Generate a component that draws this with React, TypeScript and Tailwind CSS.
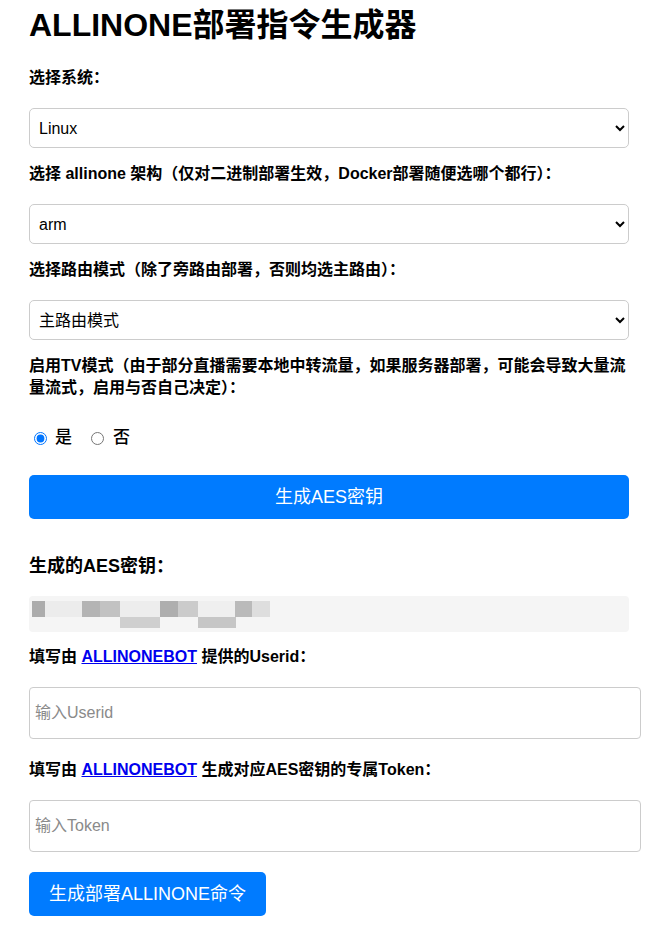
import { useState } from "react"

const font = { fontFamily: '"Liberation Sans", Arial, "Noto Sans CJK SC", sans-serif' }

// pixelated blur over the key
const keyRow1 = [
  { w: 13, c: "bg-[#acacac]" },
  { w: 37, c: "bg-[#ececec]" },
  { w: 18, c: "bg-[#b4b4b4]" },
  { w: 20, c: "bg-[#c2c2c2]" },
  { w: 40, c: "bg-[#ededed]" },
  { w: 18, c: "bg-[#aeaeae]" },
  { w: 20, c: "bg-[#cbcbcb]" },
  { w: 37, c: "bg-[#efefef]" },
  { w: 17, c: "bg-[#bababa]" },
  { w: 18, c: "bg-[#dedede]" },
]

export default function App() {
  const [tv, setTv] = useState("yes")

  return (
    <div className="min-h-screen bg-white pl-[29px] pt-[7px] pb-6 text-black" style={font}>
      <h1 className="text-[32px] font-bold leading-[37px]">ALLINONE部署指令生成器</h1>

      <div className="w-[600px]">
        <label className="mt-[23px] block text-[16px] font-bold leading-[22px]">选择系统：</label>
        <select
          defaultValue="linux"
          className="mt-[19px] block h-[40px] w-[600px] rounded-[5px] border border-[#cccccc] bg-white px-[5px] text-[16px]"
        >
          <option value="linux">Linux</option>
          <option value="windows">Windows</option>
          <option value="docker">Docker</option>
        </select>

        <label className="mt-[15px] block text-[16px] font-bold leading-[22px]">
          选择 allinone 架构（仅对二进制部署生效，Docker部署随便选哪个都行）：
        </label>
        <select
          defaultValue="arm"
          className="mt-[19px] block h-[40px] w-[600px] rounded-[5px] border border-[#cccccc] bg-white px-[5px] text-[16px]"
        >
          <option value="arm">arm</option>
          <option value="amd64">amd64</option>
        </select>

        <label className="mt-[15px] block text-[16px] font-bold leading-[22px]">
          选择路由模式（除了旁路由部署，否则均选主路由）：
        </label>
        <select
          defaultValue="main"
          className="mt-[19px] block h-[40px] w-[600px] rounded-[5px] border border-[#cccccc] bg-white px-[5px] text-[16px]"
        >
          <option value="main">主路由模式</option>
          <option value="side">旁路由模式</option>
        </select>

        <label className="mt-[15px] block text-[16px] font-bold leading-[22px]">
          启用TV模式（由于部分直播需要本地中转流量，如果服务器部署，可能会导致大量流量流式，启用与否自己决定）：
        </label>

        <div className="mt-[28px] flex items-center text-[17px] leading-[22px]">
          <label className="flex items-center">
            <input
              type="radio"
              name="tv"
              checked={tv === "yes"}
              onChange={() => setTv("yes")}
              className="ml-[5px] mr-[8px] h-[13px] w-[13px] accent-[#0075ff]"
            />
            <span className="font-medium">是</span>
          </label>
          <label className="ml-[19px] flex items-center">
            <input
              type="radio"
              name="tv"
              checked={tv === "no"}
              onChange={() => setTv("no")}
              className="mr-[9px] h-[13px] w-[13px] accent-[#0075ff]"
            />
            <span className="font-medium">否</span>
          </label>
        </div>

        <button className="mt-[26px] block h-[44px] w-[600px] rounded-[5px] bg-[#007bff] text-[18px] text-white">
          生成AES密钥
        </button>

        <h3 className="mt-[35px] text-[18px] font-bold leading-[24px]">生成的AES密钥：</h3>

        <div className="mt-[18px] h-[36px] w-[600px] rounded-[4px] bg-[#f5f5f5] pl-[3px] pt-[5px]">
          <div className="flex h-[16px]">
            {keyRow1.map((b, i) => (
              <div key={i} className={`h-full ${b.c}`} style={{ width: b.w }} />
            ))}
          </div>
          <div className="flex h-[11px]">
            <div className="w-[88px]" />
            <div className="h-full w-[40px] bg-[#cfcfcf]" />
            <div className="w-[38px]" />
            <div className="h-full w-[38px] bg-[#c6c6c6]" />
          </div>
        </div>

        <label className="mt-[14px] block text-[16px] font-bold leading-[22px]">
          填写由{" "}
          <a href="#" className="text-[#0000ee] underline">
            ALLINONEBOT
          </a>{" "}
          提供的Userid：
        </label>
      </div>

      <input
        type="text"
        placeholder="输入Userid"
        className="mt-[19px] block h-[52px] w-[612px] rounded-[4px] border border-[#cccccc] px-[5px] text-[16px] placeholder:text-[#8a8a8a]"
      />

      <label className="mt-[20px] block text-[16px] font-bold leading-[22px]">
        填写由{" "}
        <a href="#" className="text-[#0000ee] underline">
          ALLINONEBOT
        </a>{" "}
        生成对应AES密钥的专属Token：
      </label>

      <input
        type="text"
        placeholder="输入Token"
        className="mt-[19px] block h-[52px] w-[612px] rounded-[4px] border border-[#cccccc] px-[5px] text-[16px] placeholder:text-[#8a8a8a]"
      />

      <button className="mt-[20px] block h-[44px] w-[237px] rounded-[5px] bg-[#007bff] text-[18px] text-white">
        生成部署ALLINONE命令
      </button>
    </div>
  )
}
